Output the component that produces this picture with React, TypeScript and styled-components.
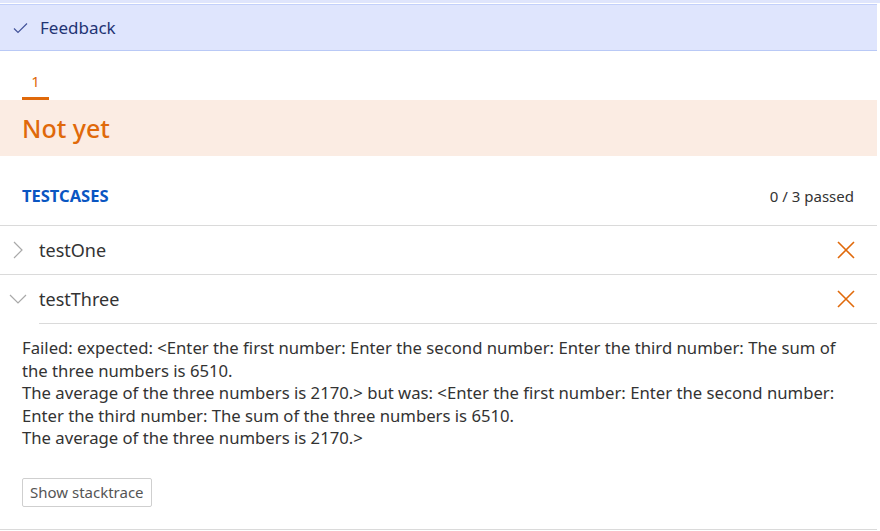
import styled, { createGlobalStyle } from "styled-components";

const GlobalStyle = createGlobalStyle`
  body {
    margin: 0;
    background: #fff;
    font-family: "Noto Sans", "Open Sans", sans-serif;
    color: #333;
  }
`;

interface ITestCase {
  name: string;
  open?: boolean;
  message?: string[];
}

const testCases: ITestCase[] = [
  { name: "testOne" },
  {
    name: "testThree",
    open: true,
    message: [
      "Failed: expected: <Enter the first number: Enter the second number: Enter the third number: The sum of the three numbers is 6510.",
      "The average of the three numbers is 2170.> but was: <Enter the first number: Enter the second number: Enter the third number: The sum of the three numbers is 6510.",
      "The average of the three numbers is 2170.>",
    ],
  },
];

const CheckIcon = () => (
  <svg width="15" height="12" viewBox="0 0 15 12" fill="none">
    <path d="M1 6.5 L5 10.5 L14 1.5" stroke="#44549a" strokeWidth="1.2" />
  </svg>
);

const Chevron = ({ open }: { open?: boolean }) =>
  open ? (
    <svg width="18" height="10" viewBox="0 0 18 10" fill="none">
      <path d="M1 1 L9 9 L17 1" stroke="#a9a9a9" strokeWidth="1.2" />
    </svg>
  ) : (
    <svg width="10" height="18" viewBox="0 0 10 18" fill="none">
      <path d="M1 1 L9 9 L1 17" stroke="#a9a9a9" strokeWidth="1.2" />
    </svg>
  );

const CrossIcon = () => (
  <svg width="18" height="18" viewBox="0 0 18 18" fill="none">
    <path d="M1 1 L17 17 M17 1 L1 17" stroke="#e0690a" strokeWidth="1.6" />
  </svg>
);

const App = () => {
  return (
    <>
      <GlobalStyle />
      <TopStrip />
      <Panel>
        <Header>
          <CheckIcon />
          <HeaderTitle>Feedback</HeaderTitle>
        </Header>
        <Tabs>
          <Tab $active>1</Tab>
        </Tabs>
        <Verdict>Not yet</Verdict>
        <SectionHead>
          <SectionTitle>TESTCASES</SectionTitle>
          <Summary>0 / 3 passed</Summary>
        </SectionHead>
        <CaseList>
          {testCases.map((tc) => (
            <CaseItem key={tc.name}>
              <CaseRow>
                <ChevronBox>
                  <Chevron open={tc.open} />
                </ChevronBox>
                <CaseName>{tc.name}</CaseName>
                <CrossIcon />
              </CaseRow>
              {tc.open && tc.message && (
                <CaseBody>
                  <Message>
                    {tc.message.map((line) => (
                      <span key={line}>
                        {line}
                        <br />
                      </span>
                    ))}
                  </Message>
                  <StackButton>Show stacktrace</StackButton>
                </CaseBody>
              )}
            </CaseItem>
          ))}
        </CaseList>
      </Panel>
    </>
  );
};

export default App;

const TopStrip = styled.div`
  height: 3px;
  background: #dfe5fc;
`;

const Panel = styled.div`
  width: 877px;
`;

const Header = styled.div`
  display: flex;
  align-items: center;
  gap: 12px;
  height: 47px;
  padding: 0 12px 0 13px;
  margin-top: 1px;
  background: #dfe5fd;
  border-top: 1px solid #c3d0fa;
  border-bottom: 1px solid #b9c9f6;
  box-sizing: border-box;
`;

const HeaderTitle = styled.span`
  font-size: 17px;
  color: #1f3474;
`;

const Tabs = styled.div`
  display: flex;
  padding: 20px 0 0 22px;
`;

const Tab = styled.div<{ $active?: boolean }>`
  width: 27px;
  height: 29px;
  box-sizing: border-box;
  text-align: center;
  font-size: 15px;
  line-height: 20px;
  color: #e0690a;
  border-bottom: 3px solid
    ${({ $active }) => ($active ? "#e0690a" : "transparent")};
`;

const Verdict = styled.div`
  height: 56px;
  padding: 0 22px;
  display: flex;
  align-items: center;
  background: #fbece3;
  color: #e0690a;
  font-size: 25px;
  font-weight: 500;
`;

const SectionHead = styled.div`
  display: flex;
  align-items: center;
  justify-content: space-between;
  height: 70px;
  box-sizing: border-box;
  padding: 10px 23px 0 22px;
  border-bottom: 1px solid #dadada;
`;

const SectionTitle = styled.span`
  font-size: 16.5px;
  font-weight: 700;
  color: #0a56c2;
`;

const Summary = styled.span`
  font-size: 15px;
  color: #333;
`;

const CaseList = styled.ul`
  list-style: none;
  margin: 0;
  padding: 0;
`;

const CaseItem = styled.li`
  border-bottom: 1px solid #dadada;
`;

const CaseRow = styled.div`
  display: flex;
  align-items: center;
  height: 48px;
  padding-right: 22px;
`;

const ChevronBox = styled.div`
  width: 39px;
  display: flex;
  justify-content: center;
  padding-right: 3px;
  box-sizing: border-box;
`;

const CaseName = styled.span`
  flex: 1;
  font-size: 18px;
  color: #333;
`;

const CaseBody = styled.div`
  margin-left: 39px;
  padding: 13px 22px 22px 0;
  border-top: 1px solid #dadada;
`;

const Message = styled.p`
  margin: 0 0 0 -17px;
  font-size: 16.7px;
  line-height: 22.6px;
  color: #333;
`;

const StackButton = styled.button`
  margin: 28px 0 0 -17px;
  padding: 0 7px;
  height: 29px;
  font-family: "Noto Sans", "Open Sans", sans-serif;
  font-size: 15px;
  color: #555;
  background: #fff;
  border: 1px solid #cfcfcf;
  border-radius: 2px;
`;
